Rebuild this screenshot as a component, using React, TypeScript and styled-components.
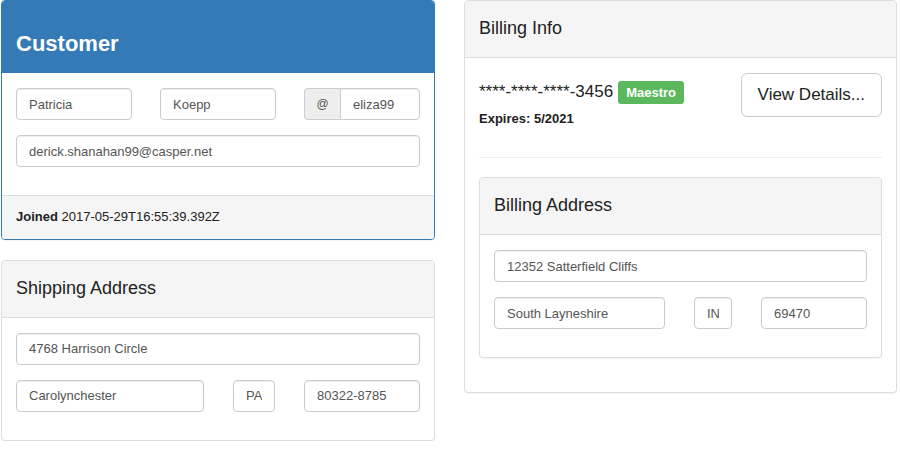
import { createGlobalStyle, styled } from "styled-components";

const GlobalStyle = createGlobalStyle`
    *, *::before, *::after {
        box-sizing: border-box;
    }
    body {
        margin: 0;
        background: #fff;
        color: #333;
        font-family: "Liberation Sans", Arial, Helvetica, sans-serif;
        font-size: 13px;
        line-height: 1.42857;
    }
`;

const Page = styled.div`
    display: grid;
    grid-template-columns: 434px 433px;
    column-gap: 29px;
    align-items: start;
    padding-left: 1px;
`;

const Column = styled.div`
    display: flex;
    flex-direction: column;
    gap: 20px;
`;

const Panel = styled.section<{ $primary?: boolean; $nested?: boolean }>`
    background: #fff;
    border: 1px solid ${(p) => (p.$primary ? "#337ab7" : "#ddd")};
    border-radius: 4px;
    box-shadow: 0 1px 1px rgba(0, 0, 0, 0.05);
    overflow: hidden;
    margin-bottom: ${(p) => (p.$nested ? "19px" : "0")};
`;

const PanelHeading = styled.h3`
    margin: 0;
    padding: 18px 14px;
    background: #f5f5f5;
    border-bottom: 1px solid #ddd;
    color: #222;
    font-size: 18px;
    font-weight: normal;
    line-height: 1.1;
`;

const PrimaryHeading = styled.h1`
    margin: 0;
    padding: 31px 14px 16px;
    background: #337ab7;
    border-bottom: 1px solid #337ab7;
    color: #fff;
    font-size: 22px;
    font-weight: bold;
    line-height: 1.1;
`;

const PanelBody = styled.div`
    padding: 15px 14px;
`;

const PanelFooter = styled.div`
    padding: 12px 14px;
    background: #f5f5f5;
    border-top: 1px solid #ddd;
    color: #222;
    font-size: 13px;

    b {
        font-weight: bold;
    }
`;

const FormRow = styled.div<{ $cols?: string; $gap?: number }>`
    display: grid;
    grid-template-columns: ${(p) => p.$cols ?? "1fr"};
    column-gap: ${(p) => p.$gap ?? 29}px;
    margin-bottom: 15px;

    &:last-child {
        margin-bottom: 13px;
    }
`;

const Input = styled.input<{ $attached?: boolean }>`
    display: block;
    width: 100%;
    min-width: 0;
    height: 32px;
    padding: 6px 12px;
    border: 1px solid #ccc;
    border-radius: ${(p) => (p.$attached ? "0 4px 4px 0" : "4px")};
    background: #fff;
    box-shadow: inset 0 1px 1px rgba(0, 0, 0, 0.075);
    color: #555;
    font: inherit;
    font-size: 13px;
    outline: none;
`;

const InputGroup = styled.div`
    display: flex;
`;

const Addon = styled.span`
    display: flex;
    align-items: center;
    justify-content: center;
    flex: 0 0 36px;
    height: 32px;
    background: #eee;
    border: 1px solid #ccc;
    border-right: 0;
    border-radius: 4px 0 0 4px;
    color: #555;
    font-size: 12px;
`;

const CardRow = styled.div`
    display: flex;
    justify-content: space-between;
    align-items: flex-start;
`;

const CardInfo = styled.div`
    padding-top: 5px;
`;

const CardNumber = styled.div`
    font-size: 17px;
    line-height: 28px;
    color: #222;
`;

const Badge = styled.span<{ $color?: string }>`
    margin-left: 5px;
    padding: 4px 8px;
    border-radius: 3px;
    background: ${(p) => p.$color ?? "#5cb85c"};
    color: #fff;
    font-size: 13px;
    font-weight: bold;
`;

const Expires = styled.div`
    margin-top: 3px;
    font-size: 13px;
    font-weight: bold;
    color: #222;
`;

const Button = styled.button`
    height: 44px;
    padding: 10px 16px;
    background: #fff;
    border: 1px solid #ccc;
    border-radius: 6px;
    color: #222;
    font: inherit;
    font-size: 17px;
    line-height: 22px;
    cursor: pointer;
`;

const Divider = styled.hr`
    margin: 29px 0 19px;
    border: 0;
    border-top: 1px solid #eee;
`;

type Address = { street: string; city: string; state: string; zip: string };

function AddressFields({ address, cols }: { address: Address; cols: string }) {
    return (
        <>
            <FormRow>
                <Input readOnly value={address.street} />
            </FormRow>
            <FormRow $cols={cols}>
                <Input readOnly value={address.city} />
                <Input readOnly value={address.state} />
                <Input readOnly value={address.zip} />
            </FormRow>
        </>
    );
}

export default function App() {
    return (
        <>
            <GlobalStyle />
            <Page>
                <Column>
                    <Panel $primary>
                        <PrimaryHeading>Customer</PrimaryHeading>
                        <PanelBody>
                            <FormRow $cols="repeat(3, 1fr)" $gap={28}>
                                <Input readOnly value="Patricia" />
                                <Input readOnly value="Koepp" />
                                <InputGroup>
                                    <Addon>@</Addon>
                                    <Input $attached readOnly value="eliza99" />
                                </InputGroup>
                            </FormRow>
                            <FormRow>
                                <Input readOnly value="derick.shanahan99@casper.net" />
                            </FormRow>
                        </PanelBody>
                        <PanelFooter>
                            <b>Joined</b> 2017-05-29T16:55:39.392Z
                        </PanelFooter>
                    </Panel>

                    <Panel>
                        <PanelHeading>Shipping Address</PanelHeading>
                        <PanelBody>
                            <AddressFields
                                cols="1fr 42px 116px"
                                address={{
                                    street: "4768 Harrison Circle",
                                    city: "Carolynchester",
                                    state: "PA",
                                    zip: "80322-8785",
                                }}
                            />
                        </PanelBody>
                    </Panel>
                </Column>

                <Column>
                    <Panel>
                        <PanelHeading>Billing Info</PanelHeading>
                        <PanelBody>
                            <CardRow>
                                <CardInfo>
                                    <CardNumber>
                                        ****-****-****-3456<Badge>Maestro</Badge>
                                    </CardNumber>
                                    <Expires>Expires: 5/2021</Expires>
                                </CardInfo>
                                <Button>View Details...</Button>
                            </CardRow>
                            <Divider />
                            <Panel $nested>
                                <PanelHeading>Billing Address</PanelHeading>
                                <PanelBody>
                                    <AddressFields
                                        cols="1fr 38px 106px"
                                        address={{
                                            street: "12352 Satterfield Cliffs",
                                            city: "South Layneshire",
                                            state: "IN",
                                            zip: "69470",
                                        }}
                                    />
                                </PanelBody>
                            </Panel>
                        </PanelBody>
                    </Panel>
                </Column>
            </Page>
        </>
    );
}
